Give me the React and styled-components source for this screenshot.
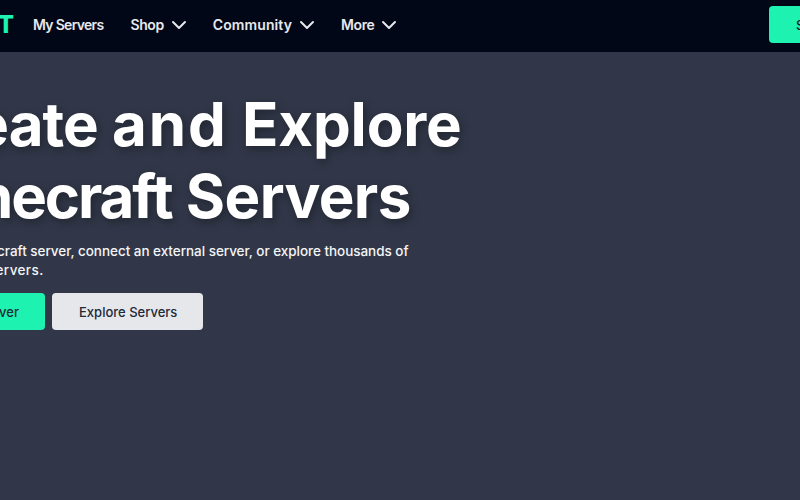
import React from "react";
import styled, { createGlobalStyle } from "styled-components";
import { ChevronDown } from "lucide-react";

const Global = createGlobalStyle`
  html, body { margin: 0; padding: 0; width: 800px; height: 500px; overflow: hidden; background: #313748; }
  * { box-sizing: border-box; }
`;
const Page = styled.div`
  width: 1000px; height: 500px; margin-left: -100px;
  background: #313748; font-family: Inter, "Noto Sans", sans-serif;
`;
const NavBar = styled.header`
  height: 52px; background: #020717; display: flex; align-items: center; padding-bottom: 3px;
`;
const Logo = styled.div`
  width: 114px; text-align: right; color: #1df2b0; font-size: 24px; font-weight: 800; line-height: 1;
  flex: none;
`;
const NavItems = styled.nav`
  display: flex; align-items: center; gap: 22px; margin-left: 19px; flex: 1;
`;
const NavItem = styled.a`
  display: flex; align-items: center; gap: 3px; color: #e7e9ee;
  font-size: 14px; font-weight: 600; letter-spacing: ${p => p.$ls}px; white-space: nowrap;
  padding-right: ${p => (p.$plain ? 5 : 0)}px;
`;
const SignIn = styled.button`
  width: 131px; height: 37px; border: 0; border-radius: 4px; background: #1df2b0;
  color: #111827; font: 500 13px Inter, sans-serif; text-align: left; padding-left: 27px;
`;
const Hero = styled.main`
  padding: 36px 0 0 8px;
`;
const Title = styled.h1`
  margin: 0; color: #fff; font-size: 60px; line-height: 72px; font-weight: 700; white-space: nowrap;
  text-shadow: 2px 3px 8px rgba(0,0,0,.35);
`;
const Word = styled.span`
  letter-spacing: ${p => p.$ls}px;
`;
const Lead = styled.p`
  margin: 10px 0 0; color: #f4f5f7; font-size: 13.5px; line-height: 19px; font-weight: 500; white-space: nowrap;
`;
const Actions = styled.div`
  display: flex; gap: 7px; margin-top: 13px;
`;
const HeroButton = styled.button`
  height: 37px; border: 0; border-radius: 4px; font: 500 13px Inter, sans-serif; color: #1f2937;
  background: ${p => (p.$primary ? "#1df2b0" : "#e5e7eb")};
  padding: ${p => (p.$primary ? "0 26px 0 25px" : "0 26px 0 27px")}; flex: none;
`;

const items = [
  { label: "My Servers", ls: -0.7, chev: false },
  { label: "Shop", ls: -0.4, chev: true },
  { label: "Community", ls: 0.1, chev: true },
  { label: "More", ls: -0.4, chev: true },
];

export default function App() {
  return (
    <Page>
      <Global />
      <NavBar>
        <Logo>HOST</Logo>
        <NavItems>
          {items.map(({ label, ls, chev }) => (
            <NavItem key={label} $ls={ls} $plain={!chev}>
              {label}
              {chev && <ChevronDown size={24} strokeWidth={2} />}
            </NavItem>
          ))}
        </NavItems>
        <SignIn>Sign in</SignIn>
      </NavBar>
      <Hero>
        <Title>
          <Word $ls={-1}>Create</Word> <Word $ls={2}>and</Word> <Word $ls={-0.2}>Explore</Word>
          <br />
          <Word $ls={-2.1}>Minecraft</Word> <Word $ls={-0.6}>Servers</Word>
        </Title>
        <Lead>
          <Word $ls={-0.04}>Create a Minecraft server, connect an external server, or explore thousands of</Word>
          <br />
          <Word $ls={0.4}>community servers.</Word>
        </Lead>
        <Actions>
          <HeroButton $primary>Create Server</HeroButton>
          <HeroButton>Explore Servers</HeroButton>
        </Actions>
      </Hero>
    </Page>
  );
}
